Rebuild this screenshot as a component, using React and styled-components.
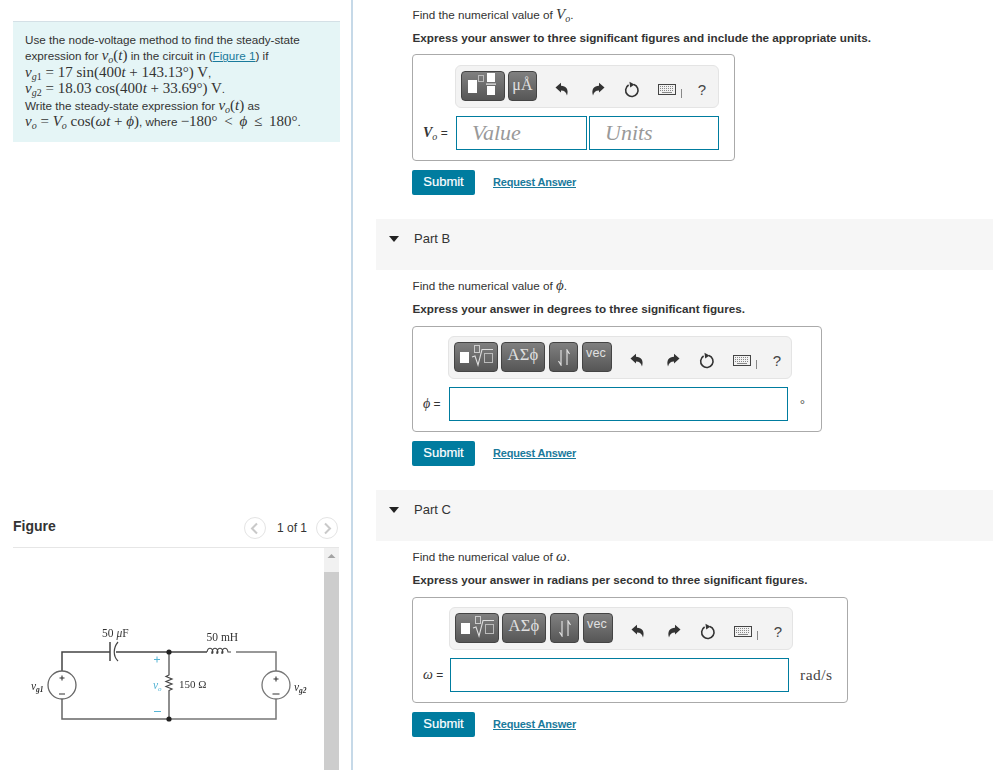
import React from "react";
import styled, { createGlobalStyle } from "styled-components";

const Global = createGlobalStyle`
  html, body { margin: 0; padding: 0; height: 770px; overflow: hidden; background: #fff; }
  body { font-family: "Liberation Sans", Arial, sans-serif; font-size: 11.7px; color: #333; }
  * { box-sizing: border-box; }
`;

const Page = styled.div`display: flex; width: 993px; height: 770px; overflow: hidden;`;
const LeftCol = styled.aside`
  width: 353px; flex: none; height: 770px; padding: 21px 12px 0 13px;
  border-right: 2px solid #c6d9e8; display: flex; flex-direction: column;
`;
const InfoBox = styled.div`
  height: 121px; width: 327px; padding: 10px 12px 0; background: #e5f5f6;
  border-top: 1px solid #d4e0e6; line-height: 16.4px; font-size: 11.7px;
`;
const MathText = styled.span`font-family: "Liberation Serif", serif; font-size: 15px; line-height: 1; color: #333;`;
const Var = styled.i`font-family: "Liberation Serif", serif;`;
const Sub = styled.sub`font-size: 10px; line-height: 0; vertical-align: -3px; font-family: "Liberation Serif", serif;`;
const InlineLink = styled.a`color: #1a7a9c; text-decoration: underline;`;

const FigureHeader = styled.div`
  margin-top: 372px; height: 34px; padding-bottom: 10px; display: flex; align-items: center;
  border-bottom: 1px solid #e6e6e6; width: 326px;
`;
const FigureTitle = styled.h2`margin: 0; font-size: 14px; font-weight: bold; color: #333; flex: 1;`;
const Pager = styled.div`display: flex; align-items: center; margin-top: 5px; margin-right: 1px;`;
const PagerBtn = styled.span`
  width: 22px; height: 22px; border: 1px solid #e4e4e4; border-radius: 50%;
  display: flex; align-items: center; justify-content: center;
`;
const PagerText = styled.span`margin: 0 9px 0 11px; font-size: 12px; color: #333;`;
const FigureBody = styled.div`display: flex; flex: 1; width: 326px; min-height: 0;`;
const Circuit = styled.svg`display: block; width: 311px; height: 222px; flex: none; filter: blur(0.4px);`;
const Scrollbar = styled.div`width: 15px; flex: none; display: flex; flex-direction: column; background: #cdcdcd;`;
const ScrollUp = styled.div`height: 24px; background: #f1f1f1; display: flex; justify-content: center; padding-top: 5px;`;

const RightCol = styled.main`flex: 1; padding-left: 23px; min-width: 0;`;
const Content = styled.section`padding: ${p => p.$pt}px 0 24px 36px;`;
const Prompt = styled.p`margin: 0 0 0 0.5px; height: 16px; line-height: 16px; font-size: 11.7px; color: #333;`;
const Instruction = styled.p`
  margin: 7px 0 ${p => p.$after}px 0.5px; height: 16px; line-height: 16px; font-size: 11.7px; font-weight: bold; color: #333;
`;
const PartBand = styled.header`
  height: 51px; background: #f6f6f6; display: flex; align-items: flex-start; padding: 11px 0 0 13px; gap: 16px;
`;
const Caret = styled.span`
  width: 0; height: 0; margin-top: 6px; border-left: 5px solid transparent; border-right: 5px solid transparent;
  border-top: 6px solid #222;
`;
const PartTitle = styled.h3`margin: 0 0 0 -1px; font-size: 13px; line-height: 18px; font-weight: normal; color: #333;`;

const AnswerBox = styled.div`
  width: ${p => p.$w}px; height: ${p => p.$h}px; padding: ${p => p.$pt}px 0 0 10px; border: 1px solid #aaa; border-radius: 4px;
`;
const ToolbarWrap = styled.div`
  width: ${p => p.$w}px; height: 43px; margin-left: ${p => p.$ml}px; padding: 5px 0 0 5px; display: flex;
  background: #f3f3f3; border: 1px solid #e4e4e4; border-radius: 6px;
`;
const ToolBtn = styled.span`
  width: ${p => p.$w}px; height: 30px; margin-right: ${p => p.$mr}px; flex: none; border: 1px solid #444; border-radius: 4px;
  background: linear-gradient(#808080, #565656); color: #e0e0e0; display: flex; justify-content: center;
  align-items: ${p => (p.$top ? "flex-start" : "center")}; overflow: hidden;
`;
const SerifGlyph = styled.span`font-family: "Liberation Serif", serif; font-size: ${p => p.$s}px; line-height: 1; letter-spacing: 0.3px; margin-top: -3px;`;
const VecGlyph = styled.span`font-size: 12.5px; line-height: 1; margin: 4px 2px 0 0; letter-spacing: 0.2px;`;
const IconSlot = styled.span`
  width: ${p => p.$w}px; margin-left: ${p => p.$ml}px; height: 30px; margin-top: 3px; flex: none;
  display: flex; align-items: center; justify-content: center; color: #444; font-size: 15px;
`;
const Divider = styled.span`width: 1px; height: 9px; background: #888; margin: 9px 0 0 5px; align-self: center;`;

const InputRow = styled.div`display: flex; align-items: center; margin-top: 8px; height: 34px;`;
const RowLabel = styled.span`width: ${p => p.$w}px; flex: none; font-size: 12px; color: #333; white-space: nowrap;`;
const LabelVar = styled.i`font-family: "Liberation Serif", serif; font-size: 14px; font-weight: ${p => p.$b ? "bold" : "normal"};`;
const Field = styled.input`
  width: ${p => p.$w}px; height: 34px; margin-right: ${p => p.$mr || 0}px; padding: 0 0 0 15px; flex: none; border: 1px solid #007c9f; border-radius: 0;
  outline: none; background: #fff; font-family: "Liberation Serif", serif; font-style: italic; font-size: 22px;
  &::placeholder { color: #999; opacity: 1; }
`;
const UnitText = styled.span`
  margin-left: ${p => p.$ml}px; font-family: "Liberation Serif", serif; color: #444; font-size: ${p => p.$s}px; letter-spacing: ${p => p.$ls || 0}px;
`;
const Actions = styled.div`display: flex; align-items: center; margin-top: 9px; height: 25px;`;
const Submit = styled.button`
  width: 63px; height: 25px; padding: 0 0 3px; border: none; border-radius: 2px; background: #007c9f; color: #fff;
  font-family: "Liberation Sans", sans-serif; font-size: 13px; -webkit-text-stroke: 0.2px #fff;
`;
const RequestLink = styled.a`
  margin: -1px 0 0 18px; color: #1a7a9c; text-decoration: underline; font-size: 11px; font-weight: bold; letter-spacing: -0.2px;
`;

const Undo = ({ flip }) => (
  <svg width="14" height="15" viewBox="0 0 14 15" style={flip ? { transform: "scaleX(-1)" } : undefined}>
    <path d="M0.5 5.5 L6 0.8 V3.8 C11 3.8 14 7.5 12 13.5 C11 10 9.5 8.4 6 8.4 V10.6 Z" fill="#333" />
  </svg>
);
const Reset = () => (
  <svg width="16" height="17" viewBox="0 0 16 17">
    <path d="M9.8 3.4 A6.2 6.2 0 1 1 4.6 4" fill="none" stroke="#333" strokeWidth="1.6" />
    <path d="M5.5 0.8 L10.5 3.6 L6.2 6.6 Z" fill="#333" />
  </svg>
);
const Keyboard = () => (
  <svg width="18" height="11" viewBox="0 0 18 11">
    <rect x="0.5" y="0.5" width="17" height="10" fill="#f2f2f2" stroke="#444" />
    <path d="M2 2.5H16M2 4.5H16M2 6.5H16" stroke="#888" strokeWidth="1" strokeDasharray="1 1" />
    <path d="M4 8.5H14" stroke="#888" />
  </svg>
);
const FracIcon = () => (
  <svg width="42" height="28" viewBox="0 0 42 28">
    <rect x="6" y="8" width="9" height="13" fill="#fff" />
    <rect x="16.5" y="3.5" width="5" height="6" fill="none" stroke="#bbb" />
    <rect x="25" y="1" width="8" height="9" fill="#fff" />
    <rect x="24" y="11.5" width="10" height="1.2" fill="#eee" />
    <rect x="25" y="14" width="8" height="9" fill="#fff" />
  </svg>
);
const RootIcon = () => (
  <svg width="42" height="28" viewBox="0 0 42 28">
    <rect x="5" y="9" width="9" height="11" fill="#fff" />
    <rect x="19.5" y="2.5" width="5" height="7" fill="none" stroke="#ccc" />
    <path d="M17 14 L20 13 L23 22 L27 6.5 H38" fill="none" stroke="#ddd" strokeWidth="1.1" />
    <rect x="29.5" y="10.5" width="8" height="9" fill="none" stroke="#bbb" />
  </svg>
);
const ArrowsIcon = () => (
  <svg width="14" height="17" viewBox="0 0 14 17">
    <path d="M4 1 V16 L1.500 12 M10 16 V1 L12.500 5" fill="none" stroke="#ddd" strokeWidth="1.2" />
  </svg>
);

const ToolIcons = () => (
  <>
    <IconSlot $w={16} $ml={17}><Undo /></IconSlot>
    <IconSlot $w={16} $ml={20}><Undo flip /></IconSlot>
    <IconSlot $w={16} $ml={18}><Reset /></IconSlot>
    <IconSlot $w={18} $ml={18}><Keyboard /></IconSlot>
    <Divider />
    <IconSlot $w={10} $ml={15}>?</IconSlot>
  </>
);

const UnitToolbar = () => (
  <ToolbarWrap $w={264} $ml={32}>
    <ToolBtn $w={44} $mr={3}><FracIcon /></ToolBtn>
    <ToolBtn $w={29} $mr={0}><SerifGlyph $s={16}>μÅ</SerifGlyph></ToolBtn>
    <ToolIcons />
  </ToolbarWrap>
);
const MathToolbar = ({ ml }) => (
  <ToolbarWrap $w={344} $ml={ml}>
    <ToolBtn $w={44} $mr={3}><RootIcon /></ToolBtn>
    <ToolBtn $w={44} $mr={4}><SerifGlyph $s={16.5}>ΑΣϕ</SerifGlyph></ToolBtn>
    <ToolBtn $w={29} $mr={4}><ArrowsIcon /></ToolBtn>
    <ToolBtn $w={30} $mr={0} $top><VecGlyph>vec</VecGlyph></ToolBtn>
    <ToolIcons />
  </ToolbarWrap>
);
const ActionRow = () => (
  <Actions>
    <Submit>Submit</Submit>
    <RequestLink href="#">Request Answer</RequestLink>
  </Actions>
);

const CircuitDrawing = () => (
  <Circuit viewBox="13 548 311 222">
    <g fill="none" stroke="#444" strokeWidth="1.5">
      <path d="M236 652 H276 V671" stroke="#777" />
      <path d="M169 719 H276 V699" stroke="#777" />
      <path d="M62 671 V652 H110 M116 652 H169 H207" />
      <path d="M110 642 V661" />
      <path d="M118 642 C113 648 113 656 118 661" strokeWidth="1.2" />
      <path d="M207 652 c1 -5 5 -5 6 0 c0 2 -2 2 -1 0 c1 -5 5 -5 6 0 c0 2 -2 2 -1 0 c1 -5 5 -5 6 0 c0 2 -2 2 -1 0 c1 -5 5 -5 6 0 c1 0 2 0 3 0" strokeWidth="1.100" />
      <path d="M62 699 V719 H169" stroke="#666" />
      <path d="M169 652 V675 l-3 1.500 l6 2.500 l-6 2.500 l6 2.500 l-6 2.500 l6 2.500 l-3 1.500 V719" strokeWidth="1.200" />
      <circle cx="62" cy="685" r="14" stroke="#666" strokeWidth="1.300" />
      <circle cx="276" cy="685" r="14" stroke="#777" strokeWidth="1.300" />
    </g>
    <circle cx="169" cy="652" r="2.600" fill="#222" />
    <circle cx="169" cy="719" r="2.600" fill="#222" />
    <g stroke="#333" strokeWidth="1.100">
      <path d="M59.500 678 H64.500 M62 675.500 V680.500 M59 694 H65" />
      <path d="M273.500 679 H278.500 M276 676.500 V681.500 M272.500 694 H279.500" />
    </g>
    <g stroke="#55b4d4" strokeWidth="1">
      <path d="M154 659.500 H160 M157 656.500 V662.500 M154 711.500 H161" />
    </g>
    <g fontFamily="Liberation Serif, serif" fontSize="11.500" fill="#333">
      <text x="102" y="637">50 <tspan fontStyle="italic">μ</tspan>F</text>
      <text x="206.500" y="641">50 mH</text>
      <text x="179" y="688" fontSize="11">150 Ω</text>
      <text x="31" y="690" fontStyle="italic">v<tspan fontSize="7.500" dy="2" fontWeight="bold">g1</tspan></text>
      <text x="294" y="691" fontStyle="italic">v<tspan fontSize="7.500" dy="2" fontWeight="bold">g2</tspan></text>
      <text x="153" y="689" fontStyle="italic" fill="#55b4d4">v<tspan fontSize="7" dy="2">o</tspan></text>
    </g>
  </Circuit>
);

const Chevron = ({ right }) => (
  <svg width="9" height="13" viewBox="0 0 9 13">
    <path d={right ? "M2 1.500 L7 6.500 L2 11.500" : "M7 1.500 L2 6.500 L7 11.500"} fill="none" stroke="#c9c9c9" strokeWidth="2" />
  </svg>
);

export default function App() {
  return (
    <Page>
      <Global />
      <LeftCol>
        <InfoBox>
          Use the node-voltage method to find the steady-state<br />
          expression for <MathText><Var>v</Var><Sub><i>o</i></Sub>(<Var>t</Var>)</MathText> in the circuit in (<InlineLink href="#">Figure 1</InlineLink>) if<br />
          <MathText><Var>v</Var><Sub><i>g</i>1</Sub> = 17 sin(400<Var>t</Var> + 143.13°) V</MathText>,<br />
          <MathText><Var>v</Var><Sub><i>g</i>2</Sub> = 18.03 cos(400<Var>t</Var> + 33.69°) V</MathText>.<br />
          Write the steady-state expression for <MathText><Var>v</Var><Sub><i>o</i></Sub>(<Var>t</Var>)</MathText> as<br />
          <MathText><Var>v</Var><Sub><i>o</i></Sub> = <Var>V</Var><Sub><i>o</i></Sub> cos(<Var>ωt</Var> + <Var>ϕ</Var>)</MathText>, where <MathText>−180°&thinsp; &lt;&thinsp; <Var>ϕ</Var>&thinsp; ≤&thinsp; 180°</MathText>.
        </InfoBox>
        <FigureHeader>
          <FigureTitle>Figure</FigureTitle>
          <Pager>
            <PagerBtn><Chevron /></PagerBtn>
            <PagerText>1 of 1</PagerText>
            <PagerBtn><Chevron right /></PagerBtn>
          </Pager>
        </FigureHeader>
        <FigureBody>
          <CircuitDrawing />
          <Scrollbar>
            <ScrollUp>
              <svg width="9" height="6" viewBox="0 0 9 6"><path d="M0.500 5 L4.500 1 L8.500 5 Z" fill="#a3a3a3" /></svg>
            </ScrollUp>
          </Scrollbar>
        </FigureBody>
      </LeftCol>
      <RightCol>
        <Content $pt={7}>
          <Prompt>Find the numerical value of <MathText><Var>V</Var><Sub><i>o</i></Sub></MathText>.</Prompt>
          <Instruction $after={8}>Express your answer to three significant figures and include the appropriate units.</Instruction>
          <AnswerBox $w={323} $h={107} $pt={10}>
            <UnitToolbar />
            <InputRow>
              <RowLabel $w={33}><LabelVar $b>V</LabelVar><Sub><i>o</i></Sub> =</RowLabel>
              <Field $w={131} $mr={2} placeholder="Value" />
              <Field $w={130} placeholder="Units" />
            </InputRow>
          </AnswerBox>
          <ActionRow />
        </Content>

        <PartBand><Caret /><PartTitle>Part B</PartTitle></PartBand>
        <Content $pt={8}>
          <Prompt>Find the numerical value of <MathText><Var>ϕ</Var></MathText>.</Prompt>
          <Instruction $after={9}>Express your answer in degrees to three significant figures.</Instruction>
          <AnswerBox $w={410} $h={106} $pt={9}>
            <MathToolbar ml={25} />
            <InputRow>
              <RowLabel $w={26}><LabelVar>ϕ</LabelVar> =</RowLabel>
              <Field $w={339} />
              <UnitText $ml={12} $s={12}>°</UnitText>
            </InputRow>
          </AnswerBox>
          <ActionRow />
        </Content>

        <PartBand><Caret /><PartTitle>Part C</PartTitle></PartBand>
        <Content $pt={8}>
          <Prompt>Find the numerical value of <MathText><Var>ω</Var></MathText>.</Prompt>
          <Instruction $after={9}>Express your answer in radians per second to three significant figures.</Instruction>
          <AnswerBox $w={436} $h={106} $pt={9}>
            <MathToolbar ml={26} />
            <InputRow>
              <RowLabel $w={27}><LabelVar>ω</LabelVar> =</RowLabel>
              <Field $w={339} />
              <UnitText $ml={11} $s={15.5} $ls={0.5}>rad/s</UnitText>
            </InputRow>
          </AnswerBox>
          <ActionRow />
        </Content>
      </RightCol>
    </Page>
  );
}
